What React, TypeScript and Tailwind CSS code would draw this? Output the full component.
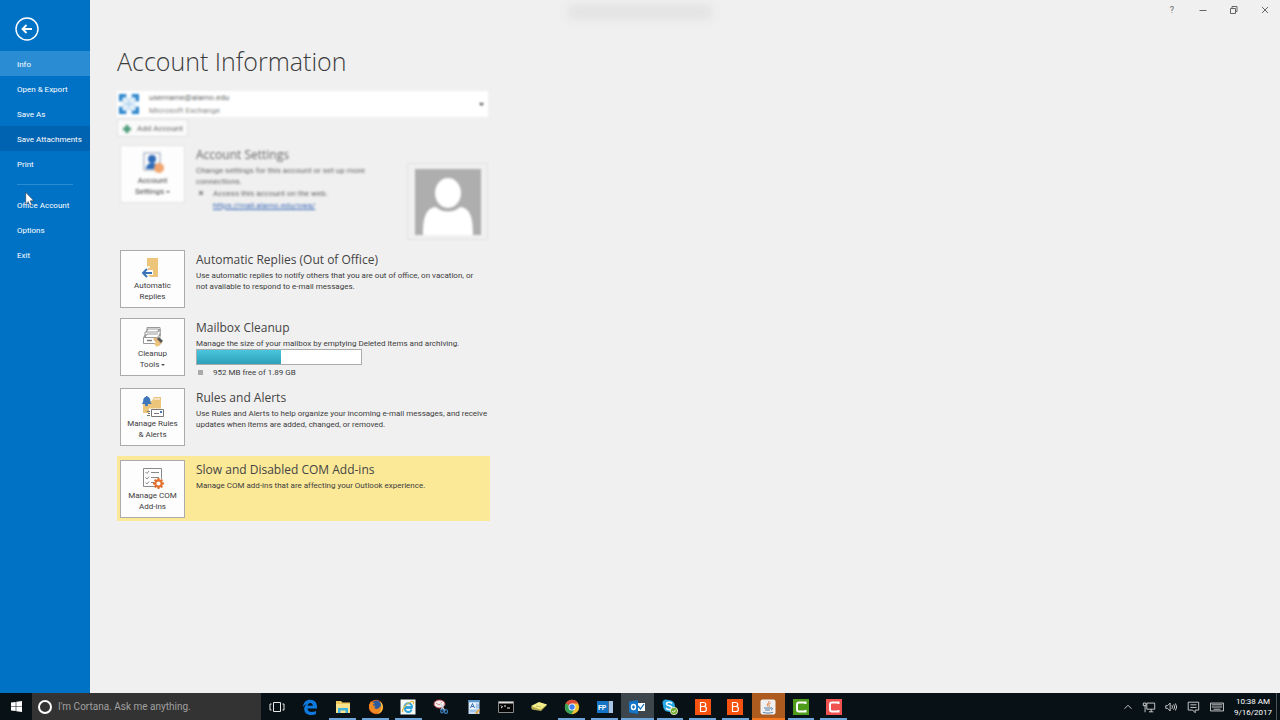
import type { ReactNode } from "react";
import clsx from "clsx";

const primaryLinks = [
  { label: "Info", state: "active" },
  { label: "Open & Export", state: "idle" },
  { label: "Save As", state: "idle" },
  { label: "Save Attachments", state: "hover" },
  { label: "Print", state: "idle" },
];

const secondaryLinks = [
  { label: "Office Account", state: "idle" },
  { label: "Options", state: "idle" },
  { label: "Exit", state: "idle" },
];

function NavItem({ label, state }: { label: string; state: string }) {
  return (
    <li>
      <a
        href="#"
        className={clsx(
          "flex h-[25px] items-center whitespace-nowrap pt-0.5 pl-[17px] text-[8px] text-white",
          state === "active" && "bg-[#2a8dd4]",
          state === "hover" && "bg-[#0063b1]"
        )}
      >
        {label}
      </a>
    </li>
  );
}

function Sidebar() {
  return (
    <nav className="relative w-[90px] shrink-0 bg-[#0072c6] pt-[17px]">
      <button type="button" aria-label="Back" className="ml-[15px] block size-6 text-white">
        <svg className="size-6" viewBox="0 0 24 24" fill="none" stroke="currentColor">
          <circle cx="12" cy="12" r="11" strokeWidth="1.400" />
          <path d="M17 12H7.500m4-4L7.500 12l4 4" strokeWidth="1.800" />
        </svg>
      </button>
      <ul className="mt-[10px]">
        {primaryLinks.map((link) => (
          <NavItem key={link.label} {...link} />
        ))}
      </ul>
      <hr className="mx-[17px] mt-2 mb-[7px] border-[#2a8dd4]" />
      <ul>
        {secondaryLinks.map((link) => (
          <NavItem key={link.label} {...link} />
        ))}
      </ul>
      {/* Mouse pointer */}
      <svg className="absolute top-[192px] left-[25px] h-[14px] w-[9px]" viewBox="0 0 9 14">
        <path d="M.7.3v11.500l2.500-2.300 1.700 4 2-.8-1.700-3.900h3.600z" fill="#fff" stroke="#223" strokeWidth=".5" />
      </svg>
    </nav>
  );
}

function AccountIcon() {
  return (
    <svg className="size-6" viewBox="0 0 24 24">
      <rect x="3" y="2" width="16" height="17" fill="#fff" stroke="#8e9bb0" />
      <circle cx="11" cy="8" r="4" fill="#2f6cb8" />
      <path d="M5 18c0-8 12-8 12 0z" fill="#2f6cb8" />
      <circle cx="18" cy="17" r="5" fill="#f2a670" />
    </svg>
  );
}

function RepliesIcon() {
  return (
    <svg className="size-6" viewBox="0 0 24 24">
      <path d="M6 2h11v19H6z" fill="#ecc47a" />
      <circle cx="8" cy="11" r="1" fill="#fff" />
      <path d="M12 14H7v-4l-6 7 6 6h4l-4-4h5z" fill="#fdfdfd" />
      <path d="M11 17H2m4-4-4 4 4 4" fill="none" stroke="#3a72b8" strokeWidth="2" />
    </svg>
  );
}

function CleanupIcon() {
  return (
    <svg className="size-6" viewBox="0 0 24 24" fill="none" stroke="#808080" strokeWidth=".8">
      <path d="M6 7V3.500h13V11M5 9l1.500-4h11L17 9" fill="#fff" />
      <path d="M4 13V8h13l2-3v7M4 13l2-3h11M2.500 13.500h14v6h-14zM2.500 13.500 5 10M16.500 13.500 19 10v4" fill="#fff" />
      <path d="M6 16.500h5" strokeWidth="1.500" />
      <path d="m12 15 3-2 6 6-3 3z" fill="#e3b47a" stroke="none" />
      <path d="m16 15 2-2 4 4-2 2z" fill="#555" stroke="none" />
      <path d="m13 20 3-3 3 3-3 3z" fill="#ecc47a" stroke="none" />
    </svg>
  );
}

function RulesIcon() {
  return (
    <svg className="size-6" viewBox="0 0 24 24">
      <path d="M2 7h9l2-4h7v16H2z" fill="#ecc47a" />
      <path d="M13 5h6" stroke="#fff" />
      <path d="M.5 10C3 8.500 1.500 6 3 4c.5-.7 1-1 2-1.200V2h1.500v.8c1 .2 1.500.5 2 1.200 1.500 2 0 4.500 2.500 6z" fill="#3f76bb" />
      <circle cx="5.500" cy="10.800" r="1.500" fill="#3f76bb" />
      <path d="M8 14.500h15V23H8z" fill="#fdfdfd" />
      <path d="M10.500 15.500h12v7h-12z" fill="#fff" stroke="#777" />
      <path d="M13 19.500h5M6 17.500h3M7 19.500h2M6 21.500h3" stroke="#777" />
      <path d="M19 17h2v2h-2z" fill="#3f76bb" />
    </svg>
  );
}

function AddinsIcon() {
  return (
    <svg className="size-6" viewBox="0 0 24 24" fill="none">
      <path d="M14 20.500H2.500v-18h18V13" stroke="#8a8a8a" />
      <path d="m4.500 6 1.500 1.500L8 5M4.500 11.500 6 13l2-2.500M4.500 16.500 6 18l2-2.500M10 6.500h8M10 11.500h8M10 16.500h3" stroke="#8a8a8a" />
      <circle cx="17.500" cy="17.500" r="3.200" stroke="#e0702c" strokeWidth="2.200" />
      <path d="M17.500 12v2.500m0 6V23M12 17.500h2.500m6 0H23M13.600 13.600l1.800 1.800m4.200 4.200 1.800 1.800m0-7.800-1.800 1.800m-4.200 4.200-1.800 1.800" stroke="#e0702c" strokeWidth="2" />
    </svg>
  );
}

type TileProps = { icon: ReactNode; lines: [string, string]; menu?: boolean; faint?: boolean };

function Tile({ icon, lines, menu, faint }: TileProps) {
  return (
    <button
      type="button"
      className={clsx(
        "flex h-[58px] w-[65px] shrink-0 flex-col items-center border bg-[#fdfdfd] pt-[5px] text-[8px] leading-[11px]",
        faint ? "border-[#e2e2e2]" : "border-[#ababab]"
      )}
    >
      {icon}
      <span>{lines[0]}</span>
      <span className="flex items-center gap-0.5">
        {lines[1]}
        {menu && (
          <svg className="h-[2px] w-1" viewBox="0 0 4 2">
            <path d="M0 0h4L2 2z" fill="#555" />
          </svg>
        )}
      </span>
    </button>
  );
}

type RowProps = { tile: ReactNode; title: string; text: string; className?: string; children?: ReactNode };

function Row({ tile, title, text, className, children }: RowProps) {
  return (
    <section className={clsx("flex gap-[11px] pl-[3px]", className)}>
      {tile}
      <div className="min-w-0 flex-1">
        <h2 className="pt-px font-['Open_Sans',sans-serif] text-[12px] leading-[18px] text-[#444]">{title}</h2>
        <p className="pt-px text-[8px] leading-[11px] whitespace-pre-line">{text}</p>
        {children}
      </div>
    </section>
  );
}

function AccountPanel() {
  return (
    <div className="blur-[1px]">
      <div className="mr-[2px] flex h-[26px] items-center bg-white pr-1 pl-[2px]">
        <svg className="size-5" viewBox="0 0 20 20">
          <path d="M0 0h20v20H0z" fill="#d3e6f5" />
          <path d="M1.500 7V1.500H7M13 1.500h5.500V7M18.500 13v5.500H13M7 18.500H1.500V13" fill="none" stroke="#2a85cc" strokeWidth="3.500" />
          <path d="M10 0v4M10 16v4M0 10h4M16 10h4" stroke="#fff" strokeWidth="3" />
          <path d="m5 5 10 10M15 5 5 15" stroke="#eef6fc" strokeWidth="2" />
          <path d="m7 10 3-3 3 3-3 3z" fill="#b5d6ee" />
        </svg>
        <div className="ml-[10px] flex flex-1 flex-col gap-0.5 text-[8px] leading-[11px]">
          <select aria-label="Account" className="h-[11px] appearance-none text-[#666]">
            <option>username@alamo.edu</option>
          </select>
          <span className="text-[#888]">Microsoft Exchange</span>
        </div>
        <svg className="h-[3px] w-[5px]" viewBox="0 0 5 3">
          <path d="M0 0h5L2.500 3z" fill="#444" />
        </svg>
      </div>
      <button
        type="button"
        className="mt-0.5 flex h-[18px] w-[71px] items-center gap-[6px] border border-[#e2e2e2] bg-[#fafafa] pt-px pl-[5px] text-[8px] text-[#666]"
      >
        <svg className="size-2" viewBox="0 0 8 8">
          <path d="M4 0v8M0 4h8" stroke="#4a9a78" strokeWidth="3" />
        </svg>
        Add Account
      </button>
      <div className="mt-2 flex pl-[3px]">
        <Tile icon={<AccountIcon />} lines={["Account", "Settings"]} menu faint />
        <div className="ml-[11px] w-[190px] text-[8px] leading-[11px] text-[#666]">
          <h2 className="pt-px font-['Open_Sans',sans-serif] text-[12px] leading-[18px]">Account Settings</h2>
          <p className="pt-px">Change settings for this account or set up more connections.</p>
          <ul className="mt-px ml-[3px]">
            <li className="flex gap-[10px]">
              <span className="mt-[3px] size-1 bg-[#999]" />
              Access this account on the web.
            </li>
          </ul>
          <a href="#" className="mt-px ml-[17px] block text-[#3a69b5] underline">
            https://mail.alamo.edu/owa/
          </a>
        </div>
        <div className="mt-[18px] mr-[2px] ml-auto flex h-[77px] w-[81px] items-center justify-center border border-[#e2e2e2]">
          <svg className="size-[66px]" viewBox="0 0 66 66">
            <path d="M0 0h66v66H0z" fill="#aeaeae" />
            <ellipse cx="33" cy="24" rx="13" ry="15" fill="#fff" />
            <path d="M8 66c0-16 2-27 13-28 6 6 18 6 24 0 11 1 13 12 13 28z" fill="#fff" />
          </svg>
        </div>
      </div>
    </div>
  );
}

function WindowControls() {
  return (
    <div className="flex gap-[9px] pr-1 text-[#666]">
      <button type="button" className="flex h-5 w-[22px] items-center justify-center pt-px text-[9px]">
        ?
      </button>
      {[
        { label: "Minimize", d: "M1.500 5.500h7" },
        { label: "Restore", d: "M1.500 3.500h5v5h-5zM3 3.500v-2h5v5H6.500" },
        { label: "Close", d: "m2 2 6 6m0-6-6 6" },
      ].map((control) => (
        <button
          key={control.label}
          type="button"
          aria-label={control.label}
          className="flex h-5 w-[22px] items-center justify-center"
        >
          <svg className="size-[10px]" viewBox="0 0 10 10" fill="none" stroke="currentColor">
            <path d={control.d} />
          </svg>
        </button>
      ))}
    </div>
  );
}

const apps: { name: string; open?: boolean; className?: string; icon: ReactNode }[] = [
  {
    name: "Task View",
    icon: <path d="M4.500 3.500h7v9h-7zM2.500 5H1v6h1.500M13.500 5H15v6h-1.500" fill="none" stroke="#e8e8e8" />,
  },
  {
    name: "Edge",
    icon: (
      <path
        d="M1 8C1.200 3.500 4.200.800 8.200.800c4.300 0 6.800 3 6.800 7v1.700H5.500c0 2.500 2 3.500 4.300 3.500 1.600 0 3-.400 4.200-1.100v3c-1.300.700-3 1.100-4.900 1.100-4 0-6.900-2.300-6.900-6 0-2.700 1.500-4.500 3.400-5.300C3.500 5.200 2 6.200 1 8zm4.600-1.200h5.200c0-1.700-.9-2.700-2.500-2.700-1.500 0-2.500 1.200-2.700 2.700z"
        fill="#0f7ade"
      />
    ),
  },
  {
    name: "File Explorer",
    open: true,
    icon: (
      <>
        <path d="M1 2h5l1.500 1.500H15V14H1z" fill="#f0c75a" />
        <path d="M1 5h14v9H1z" fill="#fbe38d" />
        <path d="M3 9h10v5h-2.500v-2.500h-5V14H3z" fill="#40b4dc" />
      </>
    ),
  },
  {
    name: "Firefox",
    open: true,
    icon: (
      <>
        <circle cx="8" cy="8" r="7.200" fill="#e8661b" />
        <circle cx="8.500" cy="6.500" r="5" fill="#2d5c9e" />
        <path d="M1 6c1-2 1.500-3 2-4 .5 1.500 2 1.800 4 2-1.500.800-2 1.500-2 2.500 1 0 2 .300 2.500 1-1.500 0-1.500 1.200-.5 2 2 1 4.500 0 5.500-3 1.500 3-.5 7.500-4.500 7.500C4 14 1 11 1 6z" fill="#f08a24" />
        <path d="M12 2.500c3 2 3.500 6 2 9-1 2-3 3.500-5 3.500 4-2 5.500-7 3-12.500z" fill="#f9c642" />
      </>
    ),
  },
  {
    name: "Internet Explorer",
    open: true,
    icon: (
      <>
        <path d="M.5.500h15v15H.5z" fill="#f6f8f4" />
        <path d="M12.200 9H5a3.300 3.300 0 0 0 6.500 1.500M4.600 8a3.700 3.700 0 0 1 7.400 0z" fill="none" stroke="#35a5dc" strokeWidth="2" />
        <path d="M3 13c-2-2 3-8.500 8-10.300 3-1 3 1 2.200 2.500" fill="none" stroke="#e5b83a" strokeWidth="1.200" />
      </>
    ),
  },
  {
    name: "Snipping Tool",
    icon: (
      <>
        <ellipse cx="6.500" cy="5" rx="5.500" ry="4" fill="#f5eeee" stroke="#c9454d" />
        <path d="m3 4 3 2 3-3" fill="none" stroke="#d98a90" />
        <path d="m7 4 5 8M11 5l-3 6" stroke="#cfd5da" strokeWidth="1.300" />
        <ellipse cx="9" cy="12" rx="1.300" ry="2" fill="none" stroke="#3f82c3" strokeWidth="1.200" />
        <ellipse cx="13" cy="12.500" rx="1.500" ry="2" fill="none" stroke="#3f82c3" strokeWidth="1.200" />
      </>
    ),
  },
  {
    name: "WordPad",
    icon: (
      <>
        <path d="M2.500 1h11v14h-11z" fill="#c5dcf3" />
        <path d="M2.500 1h11v2h-11z" fill="#5b98d0" />
        <path d="M3.500 4h6v6h-6z" fill="#f4f8fc" />
        <path d="m4.500 9 2-4.500 2 4.500M5.500 7.500h2" fill="none" stroke="#2b68b0" />
        <path d="M10 6h3M10 8h3M4 12h8" stroke="#7daada" />
        <path d="m9 14 4-4 1 1-3 4z" fill="#e9a33a" />
      </>
    ),
  },
  {
    name: "Command Prompt",
    icon: (
      <>
        <path d="M.5 2.500h15v11H.5z" fill="#050505" stroke="#888" />
        <path d="M1 3h14v1.500H1z" fill="#ddd" />
        <path d="M3 6.500 4.500 8 3 9M6 7h2M9 9h3" fill="none" stroke="#eee" />
      </>
    ),
  },
  {
    name: "Sticky Notes",
    icon: (
      <>
        <path d="m0 8 8-4.500L16 6l-6 6-9-1.500z" fill="#b7ad50" />
        <path d="m0 7 8-4 8 2.500-6.500 5z" fill="#f3ed8b" />
        <path d="m5 7 5 1" stroke="#c9bf5c" />
      </>
    ),
  },
  {
    name: "Chrome",
    open: true,
    icon: (
      <>
        <circle cx="8" cy="8" r="7.200" fill="#f4c533" />
        <path d="M8 8 1.800 4.400A7.200 7.200 0 0 1 14.300 4.500H8z" fill="#dc4a3d" />
        <path d="M1.800 4.400A7.200 7.200 0 0 0 7.500 15.200l3-5.500L8 8z" fill="#37a257" />
        <circle cx="8" cy="8" r="3.500" fill="#fff" />
        <circle cx="8" cy="8" r="2.700" fill="#4280ef" />
      </>
    ),
  },
  {
    name: "FrontPage",
    open: true,
    icon: (
      <>
        <path d="M0 2h11v12H0z" fill="#1474c6" />
        <path d="M11.500 2H16v12h-4.500z" fill="#a7c6e6" />
        <text x="1" y="10.500" fontSize="7" fontWeight="700" fill="#fff">FP</text>
      </>
    ),
  },
  {
    name: "Outlook",
    open: true,
    className: "bg-[#3d464d]",
    icon: (
      <>
        <path d="M8 4h8v8H8z" fill="#fff" />
        <path d="m9 7 2.500 3L15 5" fill="none" stroke="#1474c6" strokeWidth="1.300" />
        <path d="m0 2.500 9-1.500v14l-9-1.500z" fill="#1474c6" />
        <ellipse cx="4.500" cy="8" rx="2" ry="2.500" fill="none" stroke="#fff" strokeWidth="1.400" />
      </>
    ),
  },
  {
    name: "Skype for Business",
    open: true,
    icon: (
      <>
        <circle cx="7" cy="7" r="6" fill="#28a8e4" />
        <circle cx="4" cy="4" r="3.500" fill="#28a8e4" />
        <path d="M10 4.500C8.500 2.500 4.500 3 4.500 5S10 6.500 10 8.800s-4.500 2.400-6 .2" fill="none" stroke="#fff" strokeWidth="1.600" />
        <circle cx="12" cy="12" r="3.700" fill="#72ad2c" stroke="#fff" strokeWidth=".7" />
        <path d="m10.300 12 1.200 1.300 2.200-2.500" fill="none" stroke="#fff" />
      </>
    ),
  },
  { name: "Blackboard Collaborate", open: true, icon: <BlackboardMark /> },
  { name: "Blackboard Launcher", open: true, icon: <BlackboardMark /> },
  {
    name: "Java",
    open: true,
    className: "bg-[#ad5b1e]",
    icon: (
      <>
        <rect x=".5" y=".5" width="15" height="15" rx="2" fill="#eef0f2" />
        <path d="M8.500 2c2 1.500-3 3-.5 5.500M10.500 4C8 5 9 6 9.500 7.500" fill="none" stroke="#e0702c" />
        <path d="M4 9h7M5 11h5M3 13.300c3 1 7 1 10 0M11 9c2-.500 2 1.500 0 2" fill="none" stroke="#577ea0" />
      </>
    ),
  },
  { name: "Camtasia", open: true, icon: <CamtasiaMark fill="#4f9c1b" /> },
  { name: "Camtasia Recorder", open: true, icon: <CamtasiaMark fill="#f0524f" /> },
];

function BlackboardMark() {
  return (
    <>
      <path d="M0 0h16v16H0z" fill="#f5520f" />
      <path d="M5.500 3.500h3c3 0 3 4 0 4h-3zM5.500 7.500h3.500c3.200 0 3.200 5 0 5H5.500z" fill="none" stroke="#fff" strokeWidth="1.200" />
    </>
  );
}

function CamtasiaMark({ fill }: { fill: string }) {
  return (
    <>
      <path d="M0 0h16v16H0z" fill={fill} />
      <path d="M12.500 5V3.500H6Q4 3.500 4 5.500v5q0 2 2 2h6.500V11" fill="none" stroke="#fff" strokeWidth="2" />
    </>
  );
}

const tray = [
  { label: "Show hidden icons", width: "w-5", d: "m4 10 4-4 4 4" },
  { label: "Network", width: "w-[22px]", d: "M5.500 3.500h9v7h-9zM10.500 10.500v3M8 13.500h5M3.500 6v8M1.500 3.500h3v3h-3z" },
  { label: "Volume", width: "w-[22px]", d: "M2 6.500h2l3-3v9l-3-3H2zM9 6q1.500 2 0 4M11 5q2.500 3 0 6M13 4q3 4 0 8" },
  { label: "Notifications", width: "w-[21px]", d: "M2.500 2.500h12v9h-4v3l-3-3h-5zM5 5.500h7M5 8.500h7" },
  { label: "Touch keyboard", width: "w-[27px]", d: "M.5 3.500h15v9H.5zM2 5.500h12M2 8h12M4 10.500h8" },
];

function Taskbar() {
  return (
    <footer className="flex h-[27px] shrink-0 bg-[#071116] text-white">
      <button type="button" aria-label="Start" className="flex w-8 items-center justify-center">
        <svg className="size-[11px]" viewBox="0 0 11 11">
          <path d="M0 1.500 4.700.900v4.300H0zM5.300.800 11 0v5.200H5.300zM0 5.800h4.700v4.300L0 9.500zM5.300 5.800H11V11l-5.700-.800z" fill="#fff" />
        </svg>
      </button>
      <label className="flex w-[229px] items-center gap-[6px] bg-[#333] pl-[6px]">
        <span className="size-[14px] shrink-0 rounded-full border-2 border-white" />
        <input
          aria-label="Search"
          placeholder="I'm Cortana. Ask me anything."
          className="min-w-0 flex-1 text-[10px] outline-none placeholder:text-[#a0a0a0]"
        />
      </label>
      <div className="grid w-[589px] grid-cols-[repeat(18,minmax(0,1fr))]">
        {apps.map((app) => (
          <button
            key={app.name}
            type="button"
            aria-label={app.name}
            className={clsx("relative flex items-center justify-center", app.className)}
          >
            <svg className="size-4" viewBox="0 0 16 16">
              {app.icon}
            </svg>
            {app.open && (
              <span
                className={clsx(
                  "absolute bottom-0 h-[2px]",
                  app.className ? "inset-x-0" : "inset-x-[3px]",
                  app.name === "Java" ? "bg-[#f5771e]" : "bg-[#6ea6dc]"
                )}
              />
            )}
          </button>
        ))}
      </div>
      <div className="ml-auto flex items-center">
        {tray.map((item) => (
          <button
            key={item.label}
            type="button"
            aria-label={item.label}
            className={clsx("flex items-center justify-center", item.width)}
          >
            <svg className="size-[14px]" viewBox="0 0 16 16" fill="none" stroke="#ddd">
              <path d={item.d} />
            </svg>
          </button>
        ))}
        <div className="w-[46px] text-center text-[8px] leading-[11px]">
          <div>10:38 AM</div>
          <div>9/16/2017</div>
        </div>
        <div className="h-full w-1 border-l border-[#4a5256]" />
      </div>
    </footer>
  );
}

export default function App() {
  return (
    <div className="flex min-h-screen flex-col bg-[#f0f0f0] font-['Roboto',sans-serif] text-[#3c3c3c]">
      <div className="flex flex-1">
        <Sidebar />
        <main className="relative flex-1 pl-[27px]">
          <div className="flex h-5 justify-end">
            <WindowControls />
          </div>
          {/* Window title */}
          <div className="absolute top-1 left-[478px] h-4 w-[144px] bg-[#e4e4e4] blur-[4px]" />

          <div className="w-[373px] pt-[23px]">
            <h1 className="font-['Open_Sans',sans-serif] text-[25px] leading-9 font-light whitespace-nowrap">
              Account Information
            </h1>
            <div className="mt-3">
              <AccountPanel />
            </div>
            <div className="mt-[10px] flex flex-col gap-[10px]">
              <Row
                tile={<Tile icon={<RepliesIcon />} lines={["Automatic", "Replies"]} />}
                title="Automatic Replies (Out of Office)"
                text={"Use automatic replies to notify others that you are out of office, on vacation, or\nnot available to respond to e-mail messages."}
              />
              <Row
                tile={<Tile icon={<CleanupIcon />} lines={["Cleanup", "Tools"]} menu />}
                title="Mailbox Cleanup"
                text="Manage the size of your mailbox by emptying Deleted Items and archiving."
              >
                <div className="h-4 w-[166px] border border-[#ababab] bg-white">
                  <div className="h-full w-[84px] bg-linear-to-b from-[#48c6de] to-[#2f9fb8]" />
                </div>
                <div className="mt-0.5 flex items-center gap-[10px] pl-[2px] text-[8px] leading-[11px]">
                  <span className="size-[5px] bg-[#aaa]" />
                  952 MB free of 1.89 GB
                </div>
              </Row>
              <Row
                tile={<Tile icon={<RulesIcon />} lines={["Manage Rules", "& Alerts"]} />}
                title="Rules and Alerts"
                text={"Use Rules and Alerts to help organize your incoming e-mail messages, and receive\nupdates when items are added, changed, or removed."}
              />
              <Row
                className="bg-[#fbe998] pt-1 pb-[3px]"
                tile={<Tile icon={<AddinsIcon />} lines={["Manage COM", "Add-ins"]} />}
                title="Slow and Disabled COM Add-ins"
                text="Manage COM add-ins that are affecting your Outlook experience."
              />
            </div>
          </div>
        </main>
      </div>
      <Taskbar />
    </div>
  );
}
